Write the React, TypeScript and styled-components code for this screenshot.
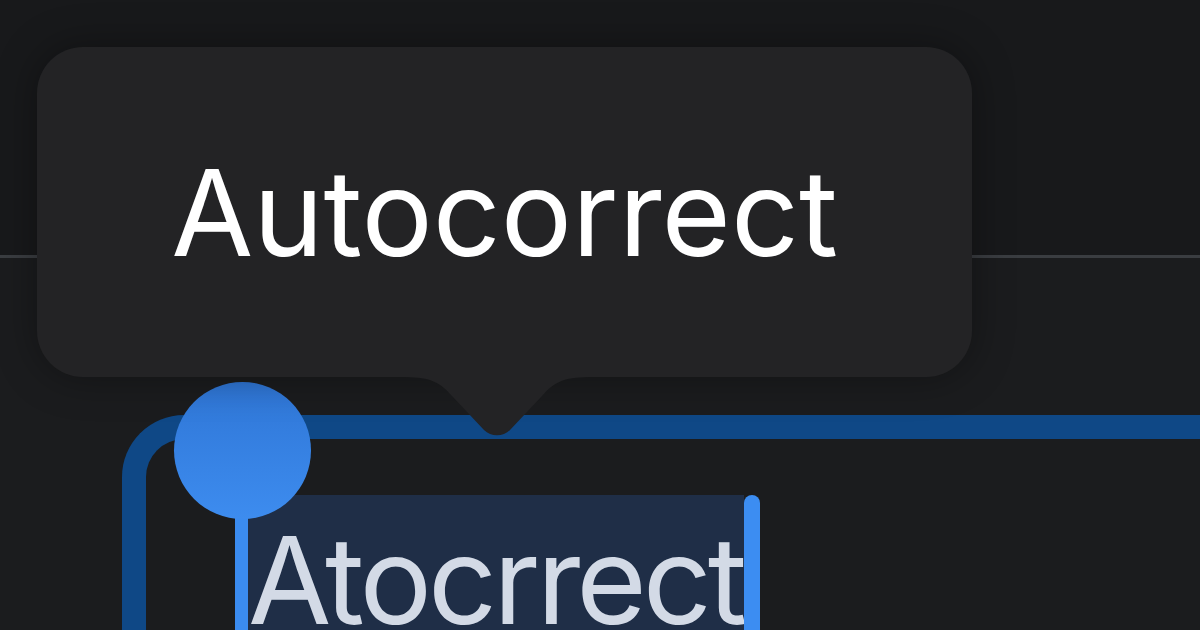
import React from 'react';
import styled, { createGlobalStyle } from 'styled-components';

const GlobalStyle = createGlobalStyle`
  html, body {
    margin: 0;
    padding: 0;
    background: #1b1c1e;
  }
  body {
    font-family: Inter, "Noto Sans", "Liberation Sans", sans-serif;
  }
`;

const Screen = styled.div`
  position: relative;
  width: 1200px;
  height: 630px;
  overflow: hidden;
  background: #1b1c1e;
  display: flex;
  flex-direction: column;
`;

const NavBar = styled.div`
  height: 255px;
  flex-shrink: 0;
  background: #18191b;
  border-bottom: 3px solid #3a3d41;
`;

const Body = styled.div`
  flex: 1;
  padding: 157px 0 0 122px;
`;

const Field = styled.div`
  width: 1300px;
  height: 400px;
  border: 24px solid #0f4886;
  border-right-color: #13529b;
  border-radius: 62px 0 0 0;
  background: #1b1c1e;
  padding: 56px 0 0 89px;
  box-sizing: border-box;
`;

const Line = styled.div`
  display: flex;
  align-items: stretch;
  height: 170px;
`;

const StartHandle = styled.div`
  position: relative;
  width: 13px;
  background: #3b8cf0;
`;

const Knob = styled.div`
  position: absolute;
  left: 50%;
  top: -113px;
  width: 137px;
  height: 137px;
  margin-left: -68px;
  border-radius: 50%;
  background: linear-gradient(180deg, #2f76d6 0%, #3d8cef 100%);
`;

const Selected = styled.span`
  display: block;
  background: #1f2e47;
  color: #d3dae6;
  font-size: 121px;
  font-weight: 400;
  line-height: 170px;
  letter-spacing: -4px;
  padding-right: 1px;
  white-space: nowrap;
`;

const EndCursor = styled.div`
  width: 16px;
  background: #3c8df2;
  border-radius: 8px 8px 0 0;
`;

const Callout = styled.div`
  position: absolute;
  left: 37px;
  top: 47px;
  width: 935px;
  height: 330px;
  display: flex;
  align-items: center;
  justify-content: center;
  background: #232325;
  border-radius: 46px;
  box-shadow: 0 0 40px rgba(0, 0, 0, 0.35);
`;

const CalloutLabel = styled.span`
  color: #ffffff;
  font-size: 119px;
  font-weight: 400;
  letter-spacing: 0px;
  line-height: 1;
  margin-top: 2px;
`;

const Pointer = styled.svg`
  position: absolute;
  left: 363px;
  top: 329px;
`;

export default function App() {
  return (
    <>
      <GlobalStyle />
      <Screen>
        <NavBar />
        <Body>
          <Field>
            <Line>
              <StartHandle>
                <Knob />
              </StartHandle>
              <Selected>Atocrrect</Selected>
              <EndCursor />
            </Line>
          </Field>
        </Body>
        <Callout>
          <CalloutLabel>Autocorrect</CalloutLabel>
          <Pointer width="194" height="62" viewBox="0 0 194 62">
            <path
              d="M0 0 H194 V1 C166 1 156 4 142 20 L110 54 C103 61 91 61 84 54 L52 20 C38 4 28 1 0 1 Z"
              fill="#232325"
            />
          </Pointer>
        </Callout>
      </Screen>
    </>
  );
}
